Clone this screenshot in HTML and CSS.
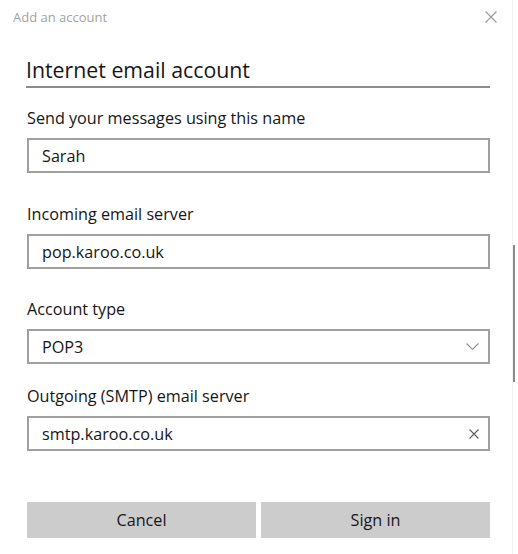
FILE: index.html
```html
<!DOCTYPE html>
<html lang="en">
<head>
<meta charset="utf-8">
<title>Add an account</title>
<link rel="stylesheet" href="styles.css">
</head>
<body>
<div class="window">
  <header class="titlebar">
    <span class="app-title">Add an account</span>
    <svg class="close" width="12" height="12" viewBox="0 0 12 12"><path d="M0.5 0.5 L11.5 11.5 M11.5 0.5 L0.5 11.5" stroke="#9a9a9a" stroke-width="1.1" fill="none"/></svg>
  </header>
  <main class="content">
    <h1 class="heading">Internet email account</h1>
    <div class="field f1">
      <label class="label">Send your messages using this name</label>
      <div class="input"><span class="value">Sarah</span></div>
    </div>
    <div class="field f2">
      <label class="label">Incoming email server</label>
      <div class="input"><span class="value">pop.karoo.co.uk</span></div>
    </div>
    <div class="field f3">
      <label class="label">Account type</label>
      <div class="input"><span class="value">POP3</span>
        <svg class="chev" width="13" height="7" viewBox="0 0 13 7"><path d="M0.5 0.5 L6.5 6.3 L12.5 0.5" stroke="#8a8a8a" stroke-width="1.1" fill="none"/></svg>
      </div>
    </div>
    <div class="field f4">
      <label class="label">Outgoing (SMTP) email server</label>
      <div class="input"><span class="value">smtp.karoo.co.uk</span>
        <svg class="clear" width="10" height="10" viewBox="0 0 10 10"><path d="M0.5 0.5 L9.5 9.5 M9.5 0.5 L0.5 9.5" stroke="#5a5a5a" stroke-width="1.1" fill="none"/></svg>
      </div>
    </div>
    <div class="actions">
      <button class="btn">Cancel</button>
      <button class="btn">Sign in</button>
    </div>
  </main>
  <div class="scroll-track"></div>
  <div class="scroll-thumb"></div>
</div>
</body>
</html>
```
FILE: styles.css
```css
html, body {
  margin: 0;
  padding: 0;
  background: #ffffff;
}
*, *::before, *::after {
  box-sizing: border-box;
}
.window {
  position: relative;
  width: 518px;
  height: 554px;
  font-family: "Open Sans", "Noto Sans", sans-serif;
  color: #161616;
  overflow: hidden;
}
.titlebar {
  display: flex;
  align-items: center;
  justify-content: space-between;
  height: 34px;
  padding: 0 21px 0 13px;
}
.app-title {
  font-size: 13px;
  color: #a3a3a3;
  margin-top: -1px;
}
.close {
  display: block;
}
.content {
  padding: 0 28px 0 27px;
}
.heading {
  margin: 22px 0 0 -1px;
  font-size: 21.3px;
  font-weight: 400;
  line-height: 28px;
  height: 32px;
  padding-bottom: 2px;
  border-bottom: 2px solid #8c8c8c;
  color: #161616;
}
.field {
  display: flex;
  flex-direction: column;
}
.f1 { margin-top: 18px; }
.f2 { margin-top: 29px; }
.f3 { margin-top: 28px; }
.f4 { margin-top: 20px; }
.label {
  font-size: 16.2px;
  line-height: 24px;
  margin-bottom: 8px;
}
.input {
  display: flex;
  align-items: center;
  justify-content: space-between;
  height: 35px;
  border: 2px solid #a0a0a0;
  padding: 0 9px 0 13px;
  font-size: 16.2px;
}
.value {
  line-height: 20px;
  margin-top: 1px;
}
.chev { display: block; }
.clear { display: block; }
.actions {
  display: flex;
  gap: 5px;
  margin-top: 51px;
}
.btn {
  flex: 1;
  height: 36px;
  border: none;
  background: #cccccc;
  font-family: "Open Sans", "Noto Sans", sans-serif;
  font-size: 16.2px;
  color: #161616;
  padding: 0;
}
.scroll-track {
  position: absolute;
  top: 0;
  right: 5px;
  width: 1px;
  height: 100%;
  background: #f2f2f2;
}
.scroll-thumb {
  position: absolute;
  top: 245px;
  right: 3px;
  width: 2px;
  height: 137px;
  background: #8a8a8a;
}
```
